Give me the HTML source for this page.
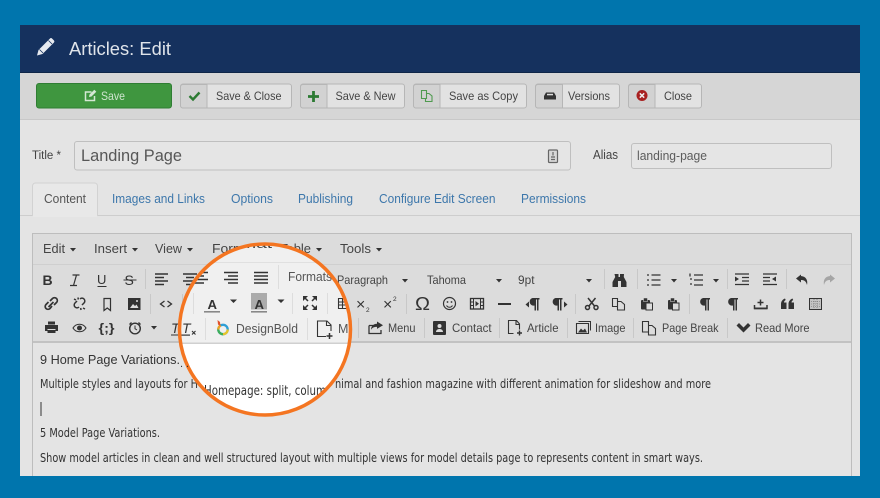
<!DOCTYPE html>
<html><head><meta charset="utf-8"><style>
html,body{margin:0;padding:0;width:880px;height:498px;overflow:hidden;background:#0075ad}
svg{display:block;filter:blur(.35px)}
text{font-family:"Liberation Sans",Arial,sans-serif}
.d{font-family:"DejaVu Sans",sans-serif}
</style></head><body>
<svg width="880" height="498" viewBox="0 0 880 498" xmlns="http://www.w3.org/2000/svg">
<defs><clipPath id="c"><circle cx="265" cy="329.500" r="85"/></clipPath></defs>
<rect width="880" height="498" fill="#0075ad"/>
<rect x="20" y="25" width="840" height="451" fill="#e4e4e4"/>
<rect x="20" y="25" width="840" height="47" fill="#15315e"/>
<rect x="20" y="72" width="840" height="1" fill="#0e2547"/>
<rect x="20" y="73" width="840" height="47" fill="#d6d6d6"/>
<rect x="20" y="119" width="840" height="1" fill="#c8c8c8"/>
<path d="M37 55.500l1.500-5.500L50 38.500a1.500 1.500 0 0 1 2 0l2 2a1.500 1.500 0 0 1 0 2L42.500 54z" fill="#e6eaf0"/>
<path d="M39.500 49.500l3.500 3.500M48.500 40.500l3.500 3.500" stroke="#15315e" stroke-width=".8" fill="none"/>
<text x="69" y="55" font-size="18" fill="#dfe4ea" textLength="102" lengthAdjust="spacingAndGlyphs">Articles: Edit</text>

<!-- Buttons -->
<rect x="36.500" y="83.500" width="135" height="24.500" rx="2.500" fill="#3f963f" stroke="#2f7d33"/>
<path d="M94.500 96v4.500h-9V92h6" fill="none" stroke="#d4e8d4" stroke-width="1.500"/><path d="M89 97l.5-2.500 4.800-4.800 2 2-4.800 4.800z" fill="#d4e8d4"/>
<text x="101" y="100" font-size="12" fill="#cfe5cf" textLength="24" lengthAdjust="spacingAndGlyphs">Save</text>

<g stroke="#b6b6b6" fill="#e2e2e2">
<rect x="180.500" y="84" width="111" height="24" rx="2.500"/>
<rect x="300.500" y="84" width="104" height="24" rx="2.500"/>
<rect x="413.500" y="84" width="113" height="24" rx="2.500"/>
<rect x="535.500" y="84" width="84" height="24" rx="2.500"/>
<rect x="628.500" y="84" width="73" height="24" rx="2.500"/>
</g>
<g fill="#d2d2d2" stroke="#b6b6b6">
<path d="M207 84.500h-24a2.500 2.500 0 0 0-2.500 2.500v18.500a2.500 2.500 0 0 0 2.500 2.500h24z"/>
<path d="M327 84.500h-24a2.500 2.500 0 0 0-2.500 2.500v18.500a2.500 2.500 0 0 0 2.500 2.500h24z"/>
<path d="M440 84.500h-24a2.500 2.500 0 0 0-2.500 2.500v18.500a2.500 2.500 0 0 0 2.500 2.500h24z"/>
<path d="M562.500 84.500h-24.500a2.500 2.500 0 0 0-2.500 2.500v18.500a2.500 2.500 0 0 0 2.500 2.500h24.500z"/>
<path d="M655 84.500h-24a2.500 2.500 0 0 0-2.500 2.500v18.500a2.500 2.500 0 0 0 2.500 2.500h24z"/>
</g>
<path d="M189.500 96l3.500 3.500 6.500-7" fill="none" stroke="#2c7a32" stroke-width="2.400"/>
<path d="M313.500 91v11M308 96.500h11" stroke="#2c7a32" stroke-width="2.800" fill="none"/>
<path d="M421.500 90.500h5l0 8h-5zM426.500 93.500h2.500l3 2.500v5.500h-6.500v-3" fill="none" stroke="#4f9a4f" stroke-width="1.100"/>
<path d="M544 96l2-3.500h8l2 3.500v3.500h-12z" fill="#333"/><rect x="547" y="93.800" width="6" height="1.500" fill="#ddd"/>
<circle cx="642" cy="95.500" r="5.500" fill="#a82020"/><path d="M639.800 93.300l4.400 4.400M644.200 93.300l-4.400 4.400" stroke="#eee" stroke-width="1.500"/>
<g font-size="11.800" fill="#444">
<text x="216" y="100" textLength="65.500" lengthAdjust="spacingAndGlyphs">Save &amp; Close</text>
<text x="335.500" y="100" textLength="60" lengthAdjust="spacingAndGlyphs">Save &amp; New</text>
<text x="449" y="100" textLength="69" lengthAdjust="spacingAndGlyphs">Save as Copy</text>
<text x="568" y="100" textLength="42" lengthAdjust="spacingAndGlyphs">Versions</text>
<text x="664" y="100" textLength="28" lengthAdjust="spacingAndGlyphs">Close</text>
</g>

<!-- Title -->
<text x="32" y="159" font-size="11.500" fill="#444" textLength="29" lengthAdjust="spacingAndGlyphs">Title *</text>
<rect x="74.500" y="141.500" width="496" height="28.500" rx="2.500" fill="#e5e5e5" stroke="#bfbfbf"/>
<text x="81" y="161" font-size="17" fill="#575757" textLength="101" lengthAdjust="spacingAndGlyphs">Landing Page</text>
<rect x="548.500" y="150" width="9" height="12.500" rx="1" fill="#d8d8d8" stroke="#666" stroke-width="1.200"/><path d="M553 152v3.500M551 157h4M551 159.500h4" stroke="#666" stroke-width="1.200"/>
<text x="593" y="159" font-size="12.500" fill="#444" textLength="25" lengthAdjust="spacingAndGlyphs">Alias</text>
<rect x="631.500" y="143.500" width="200" height="25" rx="2.500" fill="#e5e5e5" stroke="#bfbfbf"/>
<text x="637" y="160" font-size="12.500" fill="#5c5c5c" textLength="70" lengthAdjust="spacingAndGlyphs">landing-page</text>

<!-- Tabs -->
<rect x="20" y="215" width="840" height="1" fill="#cdcdcd"/>
<path d="M32.500 216v-30a3 3 0 0 1 3-3h59a3 3 0 0 1 3 3v30" fill="#e8e8e8" stroke="#d2d2d2"/>
<rect x="33" y="215" width="64" height="2" fill="#e8e8e8"/>
<text x="44" y="203" font-size="12.500" fill="#555" textLength="42" lengthAdjust="spacingAndGlyphs">Content</text>
<g font-size="12.500" fill="#3d77ab">
<text x="112" y="203" textLength="93" lengthAdjust="spacingAndGlyphs">Images and Links</text>
<text x="231" y="203" textLength="42" lengthAdjust="spacingAndGlyphs">Options</text>
<text x="298" y="203" textLength="55" lengthAdjust="spacingAndGlyphs">Publishing</text>
<text x="379" y="203" textLength="116.500" lengthAdjust="spacingAndGlyphs">Configure Edit Screen</text>
<text x="521" y="203" textLength="65" lengthAdjust="spacingAndGlyphs">Permissions</text>
</g>

<!-- Editor -->
<rect x="32" y="233" width="820" height="243" fill="#bdbdbd"/>
<rect x="33" y="234" width="818" height="242" fill="#e4e4e4"/>
<rect x="33" y="234" width="818" height="107" fill="#dcdcdc"/>
<rect x="33" y="264" width="818" height="1" fill="#cfcfcf"/>
<rect x="33" y="341" width="818" height="2" fill="#c2c2c2"/>
<g font-size="13" fill="#444">
<text x="43" y="253" textLength="22" lengthAdjust="spacingAndGlyphs">Edit</text>
<text x="94" y="253" textLength="33" lengthAdjust="spacingAndGlyphs">Insert</text>
<text x="155" y="253" textLength="27" lengthAdjust="spacingAndGlyphs">View</text>
<text x="212" y="253" textLength="44" lengthAdjust="spacingAndGlyphs">Format</text>
<text x="280" y="253" textLength="31" lengthAdjust="spacingAndGlyphs">Table</text>
<text x="340" y="253" textLength="31" lengthAdjust="spacingAndGlyphs">Tools</text>
</g>
<g fill="#333">
<path d="M70 248h6l-3 3.500zM132 248h6l-3 3.500zM187 248h6l-3 3.500zM316 248h6l-3 3.500zM376 248h6l-3 3.500z"/>
<path d="M402 279h6l-3 3.500zM496 279h6l-3 3.500zM586 279h6l-3 3.500zM671 279h6l-3 3.500zM713 279h6l-3 3.500zM151 326h6l-3 3.500z"/>
</g>
<!-- dividers -->
<g fill="#c8c8c8">
<rect x="145" y="269" width="1" height="20"/><rect x="604" y="269" width="1" height="20"/><rect x="637" y="269" width="1" height="20"/><rect x="727" y="269" width="1" height="20"/><rect x="786" y="269" width="1" height="20"/>
<rect x="150" y="294" width="1" height="20"/><rect x="182" y="294" width="1" height="20"/><rect x="406" y="294" width="1" height="20"/><rect x="575" y="294" width="1" height="20"/><rect x="689" y="294" width="1" height="20"/>
<rect x="358" y="318" width="1" height="20"/><rect x="424" y="318" width="1" height="20"/><rect x="499" y="318" width="1" height="20"/><rect x="567" y="318" width="1" height="20"/><rect x="633" y="318" width="1" height="20"/><rect x="727" y="318" width="1" height="20"/>
</g>
<!-- Row 1 left -->
<g fill="#333">
<text x="42.500" y="285" font-size="14" font-weight="bold">B</text>
<text x="97" y="284" font-size="13">U</text>
<text x="124.500" y="285" font-size="14">S</text>
</g>
<path d="M72.500 275h7M70 285.500h7M76.500 275l-3 10.500" fill="none" stroke="#333" stroke-width="1.200"/>
<path d="M97.500 286.500h9M123.500 280h13" stroke="#333" stroke-width="1.100"/>
<path d="M155 274h13M155 277.500h9M155 281h13M155 284.500h9M183 274h14M186 277.500h8M183 281h14M186 284.500h8" stroke="#333" stroke-width="1.500"/>
<!-- Row 1 right -->
<g font-size="11.800" fill="#444">
<text x="337" y="284" textLength="51" lengthAdjust="spacingAndGlyphs">Paragraph</text>
<text x="427" y="284" textLength="39" lengthAdjust="spacingAndGlyphs">Tahoma</text>
<text x="518" y="284" textLength="16.500" lengthAdjust="spacingAndGlyphs">9pt</text>
</g>
<path d="M614.500 274h4v3h1.500v-3h4v0l-.2 3 2.700 5v5h-5.500v-6h-3v6h-5.500v-5l2.700-5z" fill="#333"/>
<g fill="none" stroke="#333" stroke-width="1.300">
<path d="M651.500 275h9M651.500 280h9M651.500 285h9M647 275h2M647 280h2M647 285h2"/>
<path d="M694 275h9M694 280h9M694 285h9M690 273.500v3M690 279h2M690 284h2"/>
<path d="M735 274h14M742 277.500h7M742 281h7M735 284.500h14"/>
<path d="M763 274h14M763 277.500h7M763 281h7M763 284.500h14"/>
</g>
<path d="M735 276.500l4 2.500-4 2.500zM776 276.500l-4 2.500 4 2.500z" fill="#333"/>
<path d="M801 274.500l-5 4 5 4v-2.500c3 0 5 1 6 5 1-5-1-8.500-6-9z" fill="#333"/>
<path d="M830 274.500l5 4-5 4v-2.500c-3 0-5 1-6 5-1-5 1-8.500 6-9z" fill="#a5a5a5"/>
<!-- Row 2 left -->
<g fill="none" stroke="#333" stroke-width="1.700">
<path d="M48.500 307l5-5M50 301l2.500-2.500a2.800 2.800 0 0 1 4 4L54 305M52 306l-2 2.500a2.800 2.800 0 0 1-4-4l2.500-2.500"/>
<path d="M77 301l-2 2a2.800 2.800 0 0 0 4 4M82 305l2-2a2.800 2.800 0 0 0-4-4M74 299l2 1M85 309l-2-1M78 297.500l.3 2M81 310l-.3-2" stroke-width="1.500"/>
<path d="M104 298.500h6.500v12l-3.250-2.500-3.250 2.500z" stroke-width="1.200"/>
<path d="M164.500 301l-4 3 4 3M167.500 301l4 3-4 3" stroke-width="1.300"/>
</g>
<rect x="128" y="298" width="12.500" height="12" fill="#333"/><path d="M130 308l3-4 2 2 1.500-1.500 2 3.500z" fill="#ddd"/><circle cx="137" cy="301" r="1" fill="#ddd"/>
<!-- Row 2 right -->
<text x="356" y="309.500" font-size="16" fill="#333">×</text><text x="366" y="312" font-size="6.500" fill="#333">2</text>
<text x="383" y="309.500" font-size="16" fill="#333">×</text><text x="393" y="301" font-size="6.500" fill="#333">2</text>
<text x="415" y="310" font-size="18" fill="#333" textLength="15" lengthAdjust="spacingAndGlyphs">Ω</text>
<circle cx="449.500" cy="303.500" r="6" fill="none" stroke="#333" stroke-width="1.200"/><circle cx="447.500" cy="302" r=".9" fill="#333"/><circle cx="451.500" cy="302" r=".9" fill="#333"/><path d="M446.500 305.500a3.500 3.500 0 0 0 6 0" fill="none" stroke="#333" stroke-width="1"/>
<rect x="470.500" y="298.500" width="13" height="10.500" fill="none" stroke="#333" stroke-width="1.300"/><path d="M473.500 299v10M480.500 299v10M470.500 302h3M470.500 305.500h3M480.500 302h3M480.500 305.500h3" stroke="#333"/><path d="M475.500 301l3.500 2.700-3.500 2.700z" fill="#333"/>
<rect x="498" y="303" width="13" height="2" fill="#333"/>
<g fill="#333">
<path d="M532.500 298h7v1.500h-1v11h-1.500v-11h-1v11h-1.500v-5a3.700 3.700 0 0 1-2-7.500z"/>
<path d="M555.500 298h7v1.500h-1v11H560v-11h-1v11h-1.500v-5a3.700 3.700 0 0 1-2-7.500z"/>
<path d="M703 298h7v1.500h-1v11h-1.500v-11h-1v11H705v-5a3.700 3.700 0 0 1-2-7.500z"/>
<path d="M731 298h7v1.500h-1v11h-1.500v-11h-1v11H733v-5a3.700 3.700 0 0 1-2-7.500z"/>
<path d="M529 301.500l-3.500 3 3.500 3zM564 301.500l3.500 3-3.500 3z"/>
<path d="M781 309v-5c0-2.500 1.500-4.500 4-5.500l.7 1.500c-1 .6-1.600 1.300-1.700 2.500h2.500v6.500zM788.500 309v-5c0-2.500 1.500-4.500 4-5.500l.7 1.500c-1 .6-1.600 1.300-1.700 2.500h2.500v6.500z"/>
</g>
<g fill="none" stroke="#333" stroke-width="1.500"><circle cx="587.500" cy="307.500" r="2"/><circle cx="596" cy="307.500" r="2"/><path d="M589 306l6.500-8M594.500 306l-6.500-8"/></g>
<g fill="none" stroke="#333" stroke-width="1.100"><path d="M612.500 298.500h5l0 8h-5zM617.500 301.500h3.500l3.500 3v5.500h-7v-3"/></g>
<rect x="641" y="300" width="9" height="9.500" rx="1" fill="#333"/><rect x="643.500" y="298" width="4" height="3.500" fill="#333" stroke="#dcdcdc" stroke-width=".5"/><rect x="646" y="303" width="6.500" height="7" fill="#dcdcdc" stroke="#333"/>
<rect x="668" y="300" width="9" height="9.500" rx="1" fill="#333"/><rect x="670.500" y="298" width="4" height="3.500" fill="#333" stroke="#dcdcdc" stroke-width=".5"/><rect x="672.500" y="303" width="6.500" height="7" fill="#dcdcdc" stroke="#333"/>
<path d="M760.500 299.500v6M757.500 302.500h6M754.500 305v3.500h12.500v-3.500" fill="none" stroke="#333" stroke-width="1.500"/><rect x="754" y="307.500" width="13" height="1.700" fill="#333"/>
<rect x="809.500" y="298.500" width="12" height="11" fill="#c4c4c4" stroke="#333"/><path d="M811 301.500h9M811 304h9M811 306.500h9M814 299v10M817 299v10" stroke="#666" stroke-width=".6" stroke-dasharray="1 1"/>
<!-- Row 3 left -->
<path d="M48 321.500h7v3h-7zM45 325h13v6h-2.500v-2h-8v2H45zM47.500 330h8v3h-8z" fill="#333"/>
<path d="M73 328c3-5 10-5 13 0-3 5-10 5-13 0z" fill="none" stroke="#333" stroke-width="1.100"/><circle cx="79.500" cy="328" r="2.500" fill="#333"/>
<text x="98.500" y="332.500" font-size="12.500" font-weight="bold" fill="#333" textLength="16" lengthAdjust="spacingAndGlyphs">{;}</text>
<circle cx="135" cy="328.500" r="5.300" fill="none" stroke="#333" stroke-width="1.400"/><path d="M135 325.500v3.200l2 1.300" fill="none" stroke="#333"/><path d="M129.500 324.500l2-2M140.500 324.500l-2-2" stroke="#333" stroke-width="1.300"/>
<text x="171" y="333" font-size="14" font-style="italic" fill="#333">T</text><rect x="171" y="334.500" width="8" height="1" fill="#333"/>
<!-- Row 3 right -->
<path d="M369 325.500h6M369 325.500v8h12v-3.500" fill="none" stroke="#333" stroke-width="1.300"/><path d="M377 321.500l6 3.700-6 3.700v-2c-3 0-5 .8-6 3 0-3.500 2-6 6-6.200z" fill="#333"/>
<rect x="433" y="321" width="13" height="14" rx="1" fill="#333"/><circle cx="439.500" cy="326" r="2" fill="#ddd"/><path d="M436 332c0-4 7-4 7 0z" fill="#ddd"/>
<path d="M513.500 333.500h-5v-13h8l3 3.500v5.500M516 320.500v4h3.500" fill="none" stroke="#333" stroke-width="1.100"/><path d="M519.500 330.500v5M517 333h5" stroke="#333" stroke-width="1.400"/>
<path d="M576.500 323.500h12v10h-12z" fill="none" stroke="#333" stroke-width="1.100"/><path d="M578.500 321.500h12v9" fill="none" stroke="#333"/><path d="M578 332.500l3-4 2 2 2-2 2 4z" fill="#333"/>
<path d="M642.500 321.500h6l0 10.500h-6zM648.500 325.500h3.500l3.500 3v6.500h-7v-3" fill="none" stroke="#333" stroke-width="1.100"/>
<path d="M736.500 325.500l2.500-2.500 4.500 4.500 4.500-4.500 2.500 2.500-7 7z" fill="#333"/>
<g font-size="11.800" fill="#444">
<text x="388" y="332" textLength="27.500" lengthAdjust="spacingAndGlyphs">Menu</text>
<text x="452" y="332" textLength="39.500" lengthAdjust="spacingAndGlyphs">Contact</text>
<text x="527" y="332" textLength="31.500" lengthAdjust="spacingAndGlyphs">Article</text>
<text x="595" y="332" textLength="30.500" lengthAdjust="spacingAndGlyphs">Image</text>
<text x="662" y="332" textLength="56.500" lengthAdjust="spacingAndGlyphs">Page Break</text>
<text x="755" y="332" textLength="54.500" lengthAdjust="spacingAndGlyphs">Read More</text>
</g>
<!-- Body text -->
<text x="40" y="364" font-size="13" fill="#333" textLength="140" lengthAdjust="spacingAndGlyphs">9 Home Page Variations.</text>
<g font-size="12.300" fill="#333">
<text class="d" x="40" y="388" textLength="158" lengthAdjust="spacingAndGlyphs">Multiple styles and layouts for H</text>
<text class="d" x="335" y="388" textLength="376" lengthAdjust="spacingAndGlyphs">nimal and fashion magazine with different animation for slideshow and more</text>
<text class="d" x="40" y="437" textLength="120" lengthAdjust="spacingAndGlyphs">5 Model Page Variations.</text>
<text class="d" x="40" y="462" textLength="663" lengthAdjust="spacingAndGlyphs">Show model articles in clean and well structured layout with multiple views for model details page to represents content in smart ways.</text>
</g>
<rect x="40.500" y="402" width="1" height="14" fill="#333"/>

<!-- Magnifier -->
<circle cx="265" cy="329.500" r="85.500" fill="#fff"/>
<g clip-path="url(#c)">
<rect x="170" y="240" width="190" height="103" fill="#f0f0f0"/>
<rect x="170" y="262" width="190" height="1" fill="#e0e0e0"/>
<rect x="170" y="342.500" width="190" height="1.500" fill="#d0d0d0"/>
<text x="212" y="248" font-size="14" fill="#444" textLength="60" lengthAdjust="spacingAndGlyphs">Format</text>
<path d="M183 272.500h25M186 276h18M183 279.500h25M186 283h18" stroke="#333" stroke-width="1.600"/>
<path d="M224 272.500h14M228 276h10M224 279.500h14M228 283h10" stroke="#333" stroke-width="1.600"/>
<path d="M254 272.500h14M254 276h14M254 279.500h14M254 283h14" stroke="#333" stroke-width="1.600"/>
<rect x="278" y="265" width="1" height="24" fill="#ddd"/>
<text x="288" y="281" font-size="13" fill="#555" textLength="44" lengthAdjust="spacingAndGlyphs">Formats</text>
<rect x="193" y="293" width="1" height="21" fill="#ddd"/>
<text x="207.500" y="309" font-size="13" font-weight="bold" fill="#333" textLength="9.500" lengthAdjust="spacingAndGlyphs">A</text><rect x="204" y="311" width="16" height="1.600" fill="#888"/>
<path d="M230 299.500h7l-3.500 3.500zM277.500 299.500h7l-3.500 3.500z" fill="#333"/>
<rect x="251" y="293" width="16" height="16.500" fill="#ababab"/>
<text x="254.500" y="309" font-size="13" font-weight="bold" fill="#333" textLength="9.500" lengthAdjust="spacingAndGlyphs">A</text><rect x="251" y="311" width="16" height="1.600" fill="#888"/>
<rect x="292" y="293" width="1" height="21" fill="#ddd"/>
<path d="M303 296h5l-5 5zM317 296h-5l5 5zM303 310h5l-5-5zM317 310h-5l5-5z" fill="#333"/><path d="M305 298l3 3M315 298l-3 3M305 308l3-3M315 308l-3-3" stroke="#333" stroke-width="1.500"/>
<rect x="327" y="293" width="1" height="21" fill="#ddd"/>
<path d="M338.500 298.500h9v10h-9zM338.500 302h9M338.500 305h9M342.500 298.500v10" fill="none" stroke="#333" stroke-width="1.100"/>
<rect x="205" y="318" width="1" height="22" fill="#ddd"/>
<text x="182" y="333" font-size="14" font-style="italic" fill="#333">T</text><rect x="181" y="334.500" width="9" height="1.200" fill="#333"/>
<path d="M192 331l3.500 3.500M195.500 331l-3.500 3.500" stroke="#333" stroke-width="1.100"/>
<!-- DesignBold logo -->
<circle cx="223" cy="329.500" r="4.700" fill="none" stroke="#2e9fd6" stroke-width="2.300"/>
<path d="M218.300 329.500a4.700 4.700 0 0 1 2.400-4.100" fill="none" stroke="#f0a41f" stroke-width="2.300"/>
<path d="M227.700 329.500a4.700 4.700 0 0 1-4.700 4.700" fill="none" stroke="#e8c52a" stroke-width="2.300"/>
<path d="M223 334.200a4.700 4.700 0 0 1-4.700-4.700" fill="none" stroke="#3fae5a" stroke-width="2.300"/>
<path d="M217.500 320l2.500 2 .5 4-2.500-1.500z" fill="#e2512a"/>
<text x="236" y="333" font-size="12.500" fill="#555" textLength="62" lengthAdjust="spacingAndGlyphs">DesignBold</text>
<rect x="307" y="318" width="1" height="22" fill="#ddd"/>
<path d="M326 336.500h-8.500v-15.500h9.500l4 4v6M326.500 321v4.500h4.500" fill="none" stroke="#333" stroke-width="1.100"/><path d="M329.500 333v6M326.500 336h6" stroke="#333" stroke-width="1.500"/>
<text x="338" y="333" font-size="12.500" fill="#555">Menu</text>
<text class="d" x="204" y="395" font-size="13.500" fill="#333" textLength="122" lengthAdjust="spacingAndGlyphs">Homepage: split, colum</text>
</g>
<circle cx="265" cy="329.500" r="85.500" fill="none" stroke="#f47521" stroke-width="3.500"/>
<text x="180" y="367" font-size="11" fill="#333">.</text>
<text x="186" y="367" font-size="11" fill="#333">.</text>
</svg>
</body></html>
